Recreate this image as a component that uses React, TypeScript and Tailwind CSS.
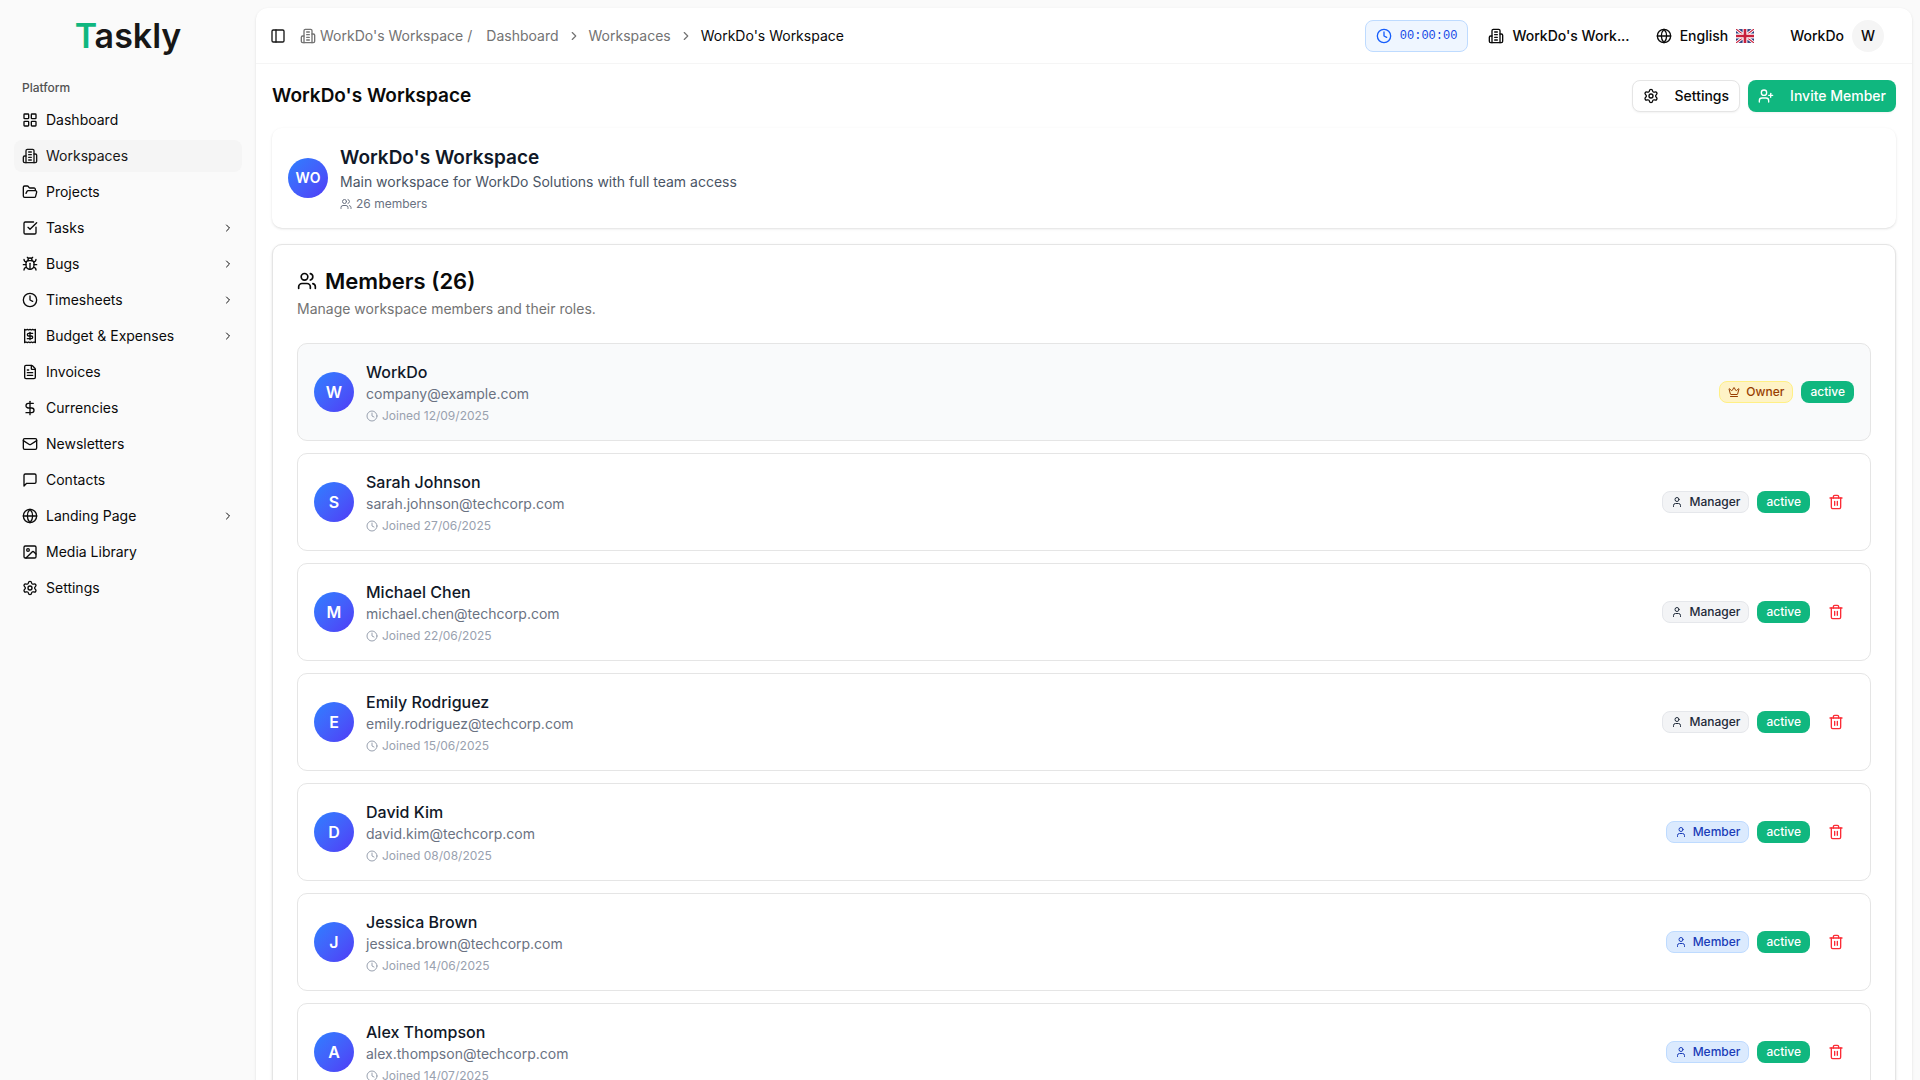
import type { ComponentType, ReactNode } from "react"
import {
  Bug,
  ChevronRight,
  Clock,
  Crown,
  DollarSign,
  FileText,
  FolderOpen,
  Globe,
  Image,
  LayoutGrid,
  Mail,
  PanelLeft,
  Settings,
  SquareCheckBig,
  User,
  UserPlus,
  Users,
} from "lucide-react"

type IconProps = { className?: string }

type NavItem = {
  title: string
  icon: ComponentType<IconProps>
  active?: boolean
  expandable?: boolean
}

type Role = "Owner" | "Manager" | "Member"

type Member = {
  name: string
  email: string
  joined: string
  role: Role
}

function StrokeIcon({ className, children }: { className?: string; children: ReactNode }) {
  return (
    <svg
      viewBox="0 0 24 24"
      fill="none"
      stroke="currentColor"
      strokeWidth="2"
      strokeLinecap="round"
      strokeLinejoin="round"
      className={className}
      aria-hidden="true"
    >
      {children}
    </svg>
  )
}

function Building({ className }: IconProps) {
  return (
    <StrokeIcon className={className}>
      <path d="M6 22V4a2 2 0 0 1 2-2h8a2 2 0 0 1 2 2v18Z" />
      <path d="M6 12H4a2 2 0 0 0-2 2v6a2 2 0 0 0 2 2h2" />
      <path d="M18 9h2a2 2 0 0 1 2 2v9a2 2 0 0 1-2 2h-2" />
      <path d="M10 6h4M10 10h4M10 14h4M10 18h4" />
    </StrokeIcon>
  )
}

function Receipt({ className }: IconProps) {
  return (
    <StrokeIcon className={className}>
      <path d="M4 2v20l2-1 2 1 2-1 2 1 2-1 2 1 2-1 2 1V2l-2 1-2-1-2 1-2-1-2 1-2-1-2 1Z" />
      <path d="M16 8h-6a2 2 0 1 0 0 4h4a2 2 0 1 1 0 4H8" />
      <path d="M12 17.5v-11" />
    </StrokeIcon>
  )
}

function Message({ className }: IconProps) {
  return (
    <StrokeIcon className={className}>
      <path d="M21 15a2 2 0 0 1-2 2H7l-4 4V5a2 2 0 0 1 2-2h14a2 2 0 0 1 2 2z" />
    </StrokeIcon>
  )
}

function Trash({ className }: IconProps) {
  return (
    <StrokeIcon className={className}>
      <path d="M3 6h18" />
      <path d="M19 6v14c0 1-1 2-2 2H7c-1 0-2-1-2-2V6" />
      <path d="M8 6V4c0-1 1-2 2-2h4c1 0 2 1 2 2v2" />
      <path d="M10 11v6M14 11v6" />
    </StrokeIcon>
  )
}

function UkFlag({ className }: IconProps) {
  return (
    <svg viewBox="0 0 60 46" className={className} aria-hidden="true">
      <rect width="60" height="46" fill="#283a7c" />
      <path d="M0 0l60 46M60 0L0 46" stroke="#fff" strokeWidth="10" />
      <path d="M0 0l60 46M60 0L0 46" stroke="#c8203c" strokeWidth="4" />
      <path d="M30 0v46M0 23h60" stroke="#fff" strokeWidth="16" />
      <path d="M30 0v46M0 23h60" stroke="#c8203c" strokeWidth="9" />
    </svg>
  )
}

const navItems: NavItem[] = [
  { title: "Dashboard", icon: LayoutGrid },
  { title: "Workspaces", icon: Building, active: true },
  { title: "Projects", icon: FolderOpen },
  { title: "Tasks", icon: SquareCheckBig, expandable: true },
  { title: "Bugs", icon: Bug, expandable: true },
  { title: "Timesheets", icon: Clock, expandable: true },
  { title: "Budget & Expenses", icon: Receipt, expandable: true },
  { title: "Invoices", icon: FileText },
  { title: "Currencies", icon: DollarSign },
  { title: "Newsletters", icon: Mail },
  { title: "Contacts", icon: Message },
  { title: "Landing Page", icon: Globe, expandable: true },
  { title: "Media Library", icon: Image },
  { title: "Settings", icon: Settings },
]

const members: Member[] = [
  { name: "WorkDo", email: "company@example.com", joined: "12/09/2025", role: "Owner" },
  { name: "Sarah Johnson", email: "sarah.johnson@techcorp.com", joined: "27/06/2025", role: "Manager" },
  { name: "Michael Chen", email: "michael.chen@techcorp.com", joined: "22/06/2025", role: "Manager" },
  { name: "Emily Rodriguez", email: "emily.rodriguez@techcorp.com", joined: "15/06/2025", role: "Manager" },
  { name: "David Kim", email: "david.kim@techcorp.com", joined: "08/08/2025", role: "Member" },
  { name: "Jessica Brown", email: "jessica.brown@techcorp.com", joined: "14/06/2025", role: "Member" },
  { name: "Alex Thompson", email: "alex.thompson@techcorp.com", joined: "14/07/2025", role: "Member" },
]

const roleStyles: Record<Role, string> = {
  Owner: "border-yellow-200 bg-amber-100 text-amber-800",
  Manager: "border-gray-200 bg-gray-100 text-gray-800",
  Member: "border-blue-200 bg-blue-100 text-blue-800",
}

function Sidebar() {
  return (
    <aside className="flex w-64 shrink-0 flex-col px-3.5">
      <div className="flex h-[72px] items-center justify-center">
        <a href="#" className="text-[34px] leading-10 font-semibold text-neutral-900">
          <span className="text-[#10b77f]">T</span>askly
        </a>
      </div>
      <div className="flex h-8 items-center px-2 text-xs font-medium text-neutral-600">Platform</div>
      <nav className="flex flex-col gap-1">
        {navItems.map((item) => (
          <a
            key={item.title}
            href="#"
            className={`flex h-8 items-center gap-2 rounded-lg px-2 text-sm ${
              item.active ? "bg-neutral-100 text-neutral-900" : "text-neutral-950"
            }`}
          >
            <item.icon className="size-4 shrink-0" />
            <span className="flex-1 truncate">{item.title}</span>
            {item.expandable && <ChevronRight className="size-3 shrink-0" />}
          </a>
        ))}
      </nav>
    </aside>
  )
}

function Header() {
  return (
    <header className="flex h-14 items-center justify-between border-b border-neutral-100 pr-4 pl-3.5">
      <div className="flex items-center gap-3.5 text-sm text-neutral-500">
        <button type="button" aria-label="Toggle sidebar" className="text-neutral-900">
          <PanelLeft className="size-4" />
        </button>
        <div className="flex items-center gap-1">
          <Building className="size-4" />
          <span>WorkDo's Workspace</span>
          <span>/</span>
        </div>
        <nav className="flex items-center gap-2">
          <a href="#">Dashboard</a>
          <ChevronRight className="size-3.5" />
          <a href="#">Workspaces</a>
          <ChevronRight className="size-3.5" />
          <span className="text-neutral-950">WorkDo's Workspace</span>
        </nav>
      </div>

      <div className="flex items-center text-sm font-medium text-neutral-950">
        <button
          type="button"
          className="mr-5 flex h-8 items-center gap-2 rounded-lg border border-blue-200 bg-blue-50 px-2.5 font-['Liberation_Mono',monospace] text-xs font-normal text-blue-700"
        >
          <Clock className="size-4 text-blue-600" />
          00:00:00
        </button>
        <button type="button" className="mr-6.5 flex items-center gap-2">
          <Building className="size-4" />
          WorkDo's Work...
        </button>
        <button type="button" className="mr-9 flex items-center gap-2">
          <Globe className="size-4" />
          English
          <UkFlag className="h-3.5 w-[18px]" />
        </button>
        <button type="button" className="mr-3 flex items-center gap-2">
          WorkDo
          <span className="flex size-8 items-center justify-center rounded-full bg-neutral-100">W</span>
        </button>
      </div>
    </header>
  )
}

function Avatar({ text, className }: { text: string; className?: string }) {
  return (
    <div
      className={`flex size-10 shrink-0 items-center justify-center rounded-full bg-linear-to-br from-[#2b7fff] to-[#4f39f6] font-semibold text-white ${className ?? ""}`}
    >
      {text}
    </div>
  )
}

function MemberRow({ member }: { member: Member }) {
  const isOwner = member.role === "Owner"
  const RoleIcon = isOwner ? Crown : User

  return (
    <li
      className={`flex items-center justify-between rounded-[10px] border border-neutral-200 p-4 ${isOwner ? "bg-gray-50" : "bg-white"}`}
    >
      <div className="flex items-center gap-3">
        <Avatar text={member.name[0]} />
        <div>
          <h3 className="text-base font-medium text-gray-900">{member.name}</h3>
          <p className="text-sm text-gray-500">{member.email}</p>
          <p className="mt-1 flex items-center gap-1 text-xs text-gray-400">
            <Clock className="size-3" />
            Joined {member.joined}
          </p>
        </div>
      </div>
      <div className="flex items-center gap-2 text-xs font-medium">
        <span className={`flex items-center gap-1.5 rounded-lg border px-2 py-0.5 ${roleStyles[member.role]}`}>
          <RoleIcon className="size-3" />
          {member.role}
        </span>
        <span className="rounded-lg border border-transparent bg-[#10b77f] px-2 py-0.5 text-white">active</span>
        {!isOwner && (
          <button
            type="button"
            aria-label={`Remove ${member.name}`}
            className="flex h-8 w-9 items-center justify-center text-red-500"
          >
            <Trash className="size-4" />
          </button>
        )}
      </div>
    </li>
  )
}

export default function App() {
  return (
    <div className="flex h-screen overflow-hidden bg-neutral-50 font-['Inter',sans-serif] text-neutral-950">
      <Sidebar />
      <div className="min-w-0 flex-1 pt-2 pr-2">
        <div className="min-h-full rounded-xl bg-white shadow-sm">
          <Header />
          <main className="flex flex-col gap-4 p-4">
            <div className="flex items-center justify-between">
              <h1 className="text-[19px] leading-7 font-semibold">WorkDo's Workspace</h1>
              <div className="flex gap-2 text-sm font-medium">
                <button
                  type="button"
                  className="flex h-8 items-center gap-4 rounded-lg border border-neutral-200 bg-white px-2.5 shadow-xs"
                >
                  <Settings className="size-4" />
                  Settings
                </button>
                <button
                  type="button"
                  className="flex h-8 items-center gap-4 rounded-lg bg-[#10b77f] px-2.5 text-white shadow-xs"
                >
                  <UserPlus className="size-4" />
                  Invite Member
                </button>
              </div>
            </div>

            <section className="flex items-center gap-3 rounded-[10px] bg-white p-4 shadow-sm">
              <Avatar text="WO" className="text-sm" />
              <div>
                <h2 className="text-[19px] leading-7 font-semibold text-gray-900">WorkDo's Workspace</h2>
                <p className="text-sm text-gray-600">Main workspace for WorkDo Solutions with full team access</p>
                <p className="mt-1 flex items-center gap-1 text-xs text-gray-500">
                  <Users className="size-3" />
                  26 members
                </p>
              </div>
            </section>

            <section className="rounded-[10px] border border-neutral-200 bg-white p-6 shadow-sm">
              <h2 className="flex items-center gap-2 text-[22px] leading-6 font-semibold">
                <Users className="size-5" />
                Members (26)
              </h2>
              <p className="mt-1.5 text-sm text-neutral-500">Manage workspace members and their roles.</p>
              <ul className="mt-6 flex flex-col gap-3">
                {members.map((member) => (
                  <MemberRow key={member.email} member={member} />
                ))}
              </ul>
            </section>
          </main>
        </div>
      </div>
    </div>
  )
}
